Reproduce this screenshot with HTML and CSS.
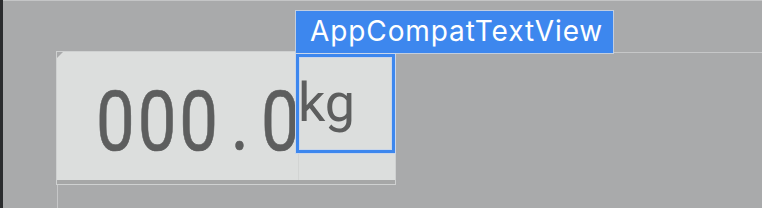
FILE: index.html
```html
<!DOCTYPE html>
<html lang="en">
<head>
    <meta charset="UTF-8">
    <title>Layout Preview</title>
    <link rel="stylesheet" href="styles.css">
</head>
<body>
    <div class="ide">
        <div class="gutter"></div>
        <div class="canvas">
            <div class="guide-h"></div>
            <div class="guide-v"></div>

            <div class="view">
                <div class="view-row">
                    <div class="value-cell">
                        <span class="value">000<span class="dot">.</span><span class="last">0</span></span>
                    </div>
                    <div class="unit-cell">
                        <span class="unit">kg</span>
                        <div class="tag">AppCompatTextView</div>
                        <div class="selection"></div>
                    </div>
                </div>
                <div class="view-bottom"></div>
            </div>
        </div>
    </div>
</body>
</html>
```

FILE: styles.css
```css
/* Base */
* {
    margin: 0;
    padding: 0;
    box-sizing: border-box;
}

body {
    width: 762px;
    height: 208px;
    overflow: hidden;
    background-color: #a9aaab;
    font-family: Roboto, 'Noto Sans', sans-serif;
}

.ide {
    display: flex;
    height: 208px;
}

.gutter {
    width: 3px;
    background-color: #2b2c2e;
}

/* Design canvas */
.canvas {
    position: relative;
    flex: 1;
    border-top: 1px solid #c4c5c6;
    padding: 50px 0 0 53px;
}

.guide-h {
    position: absolute;
    left: 53px;
    right: 0;
    top: 51px;
    height: 1px;
    background-color: #c6c7c8;
}

.guide-v {
    position: absolute;
    left: 54px;
    top: 51px;
    bottom: 0;
    width: 1px;
    background-color: #c6c7c8;
}

/* Preview view */
.view {
    position: relative;
    width: 340px;
    height: 134px;
    background-color: #dcdedd;
    border: 1px solid #cfd1d1;
    display: flex;
    flex-direction: column;
}

.view::before {
    content: '';
    position: absolute;
    left: 0;
    top: 0;
    border-top: 6px solid #a9aaab;
    border-right: 6px solid transparent;
}

.view-row {
    flex: 1;
    display: flex;
}

.value-cell {
    width: 241px;
    padding: 28px 0 0 39px;
}

.value {
    display: inline-block;
    font-size: 84px;
    line-height: 84px;
    color: #5d5e5e;
    letter-spacing: 3.6px;
    transform: scaleX(0.82);
    transform-origin: left top;
    white-space: nowrap;
    -webkit-text-stroke: 0.6px #5d5e5e;
}

.dot {
    margin: 0 11px 0 12px;
}

.last {
    letter-spacing: 0;
}

.unit-cell {
    position: relative;
    flex: 1;
    border-left: 1px solid #d2d4d3;
    padding: 24px 0 0 0;
}

.unit {
    display: block;
    margin-left: -1px;
    font-size: 54px;
    line-height: 54px;
    color: #5d5e5e;
}

.view-bottom {
    height: 4px;
    background-color: #a6a7a7;
}

/* Selection overlay */
.tag {
    position: absolute;
    left: -4px;
    top: -42px;
    width: 319px;
    height: 44px;
    background-color: #3d87ee;
    border: 1px solid #c3cede;
    color: #ffffff;
    font-family: Inter, 'Noto Sans', sans-serif;
    font-size: 28px;
    letter-spacing: 0.9px;
    line-height: 41px;
    padding-left: 14px;
    white-space: nowrap;
}

.selection {
    position: absolute;
    left: -4px;
    top: 1px;
    width: 101px;
    height: 101px;
    border: 1px solid #c9d6ea;
    box-shadow: inset 0 0 0 3px #3d87ee, inset 0 0 0 4px #c9d6ea;
}
```
